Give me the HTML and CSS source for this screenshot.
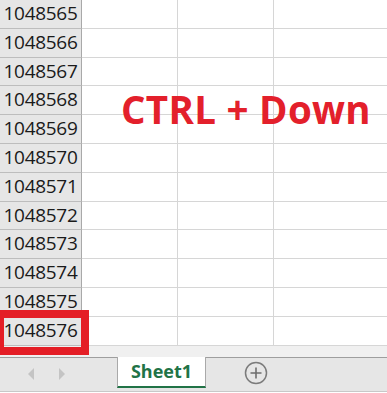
FILE: index.html
```html
<!DOCTYPE html>
<html>
<head>
<meta charset="utf-8">
<link rel="stylesheet" href="styles.css">
</head>
<body>
<div class="app">
  <div class="grid">
    <div class="rh">1048565</div><div class="c"></div><div class="c"></div><div class="c last"></div>
    <div class="rh">1048566</div><div class="c"></div><div class="c"></div><div class="c last"></div>
    <div class="rh">1048567</div><div class="c"></div><div class="c"></div><div class="c last"></div>
    <div class="rh">1048568</div><div class="c"></div><div class="c"></div><div class="c last"></div>
    <div class="rh">1048569</div><div class="c"></div><div class="c"></div><div class="c last"></div>
    <div class="rh">1048570</div><div class="c"></div><div class="c"></div><div class="c last"></div>
    <div class="rh">1048571</div><div class="c"></div><div class="c"></div><div class="c last"></div>
    <div class="rh">1048572</div><div class="c"></div><div class="c"></div><div class="c last"></div>
    <div class="rh">1048573</div><div class="c"></div><div class="c"></div><div class="c last"></div>
    <div class="rh">1048574</div><div class="c"></div><div class="c"></div><div class="c last"></div>
    <div class="rh">1048575</div><div class="c"></div><div class="c"></div><div class="c last"></div>
    <div class="rh">1048576</div><div class="c"></div><div class="c"></div><div class="c last"></div>
  </div>
  <div class="beyond"></div>
  <div class="tabbar">
    <div class="navs">
      <svg class="nav" width="8" height="12" viewBox="0 0 8 12"><polygon points="7,0 7,12 1,6" fill="#c4c4c4"/></svg>
      <svg class="nav" width="8" height="12" viewBox="0 0 8 12"><polygon points="1,0 1,12 7,6" fill="#c4c4c4"/></svg>
    </div>
    <div class="tab">Sheet1</div>
    <svg class="add" width="24" height="24" viewBox="0 0 24 24">
      <circle cx="12" cy="12" r="10.5" fill="none" stroke="#7b7b7b" stroke-width="1.5"/>
      <path d="M12 6.5V17.5M6.5 12H17.5" stroke="#6e6e6e" stroke-width="1.6"/>
    </svg>
  </div>
  <div class="callout">CTRL + Down</div>
  <div class="highlight"></div>
</div>
</body>
</html>
```
FILE: styles.css
```css
html, body {
  margin: 0;
  padding: 0;
  background: #ffffff;
  overflow: hidden;
}
.app {
  position: relative;
  width: 387px;
  height: 393px;
  font-family: "Open Sans", "Noto Sans", sans-serif;
}
.grid {
  display: grid;
  grid-template-columns: 82px 96px 96px 1fr;
  grid-auto-rows: 28.8px;
}
.rh {
  box-sizing: border-box;
  background: #e6e6e6;
  border-right: 1px solid #a9a9a9;
  border-bottom: 1px solid #bdbdbd;
  color: #1a1a1a;
  font-size: 19px;
  line-height: 27px;
  text-align: center;
  letter-spacing: -0.3px;
}
.c {
  box-sizing: border-box;
  border-right: 1px solid #d6d6d6;
  border-bottom: 1px solid #d6d6d6;
}
.c.last {
  border-right: none;
}
.beyond {
  height: 11px;
  background: #f0f0f0;
}
.tabbar {
  box-sizing: border-box;
  height: 35px;
  background: #e6e6e6;
  border-top: 1px solid #9e9e9e;
  border-bottom: 1px solid #c8c8c8;
  display: flex;
  align-items: stretch;
}
.navs {
  width: 117px;
  display: flex;
  align-items: center;
  padding-left: 27px;
  gap: 23px;
  box-sizing: border-box;
}
.nav {
  display: block;
}
.tab {
  box-sizing: border-box;
  width: 89px;
  height: 31px;
  margin-top: -1px;
  background: #ffffff;
  border-left: 1px solid #a9a9a9;
  border-right: 1px solid #a9a9a9;
  border-bottom: 2.5px solid #217346;
  color: #217346;
  font-weight: 700;
  font-size: 18px;
  line-height: 29px;
  text-align: center;
}
.add {
  display: block;
  align-self: center;
  margin-left: 38px;
  margin-top: -2px;
}
.callout {
  position: absolute;
  left: 121px;
  top: 84px;
  color: #e3202b;
  font-weight: 700;
  font-size: 38.5px;
  line-height: 50px;
  letter-spacing: 0.3px;
  white-space: nowrap;
}
.highlight {
  position: absolute;
  left: -4px;
  top: 310px;
  width: 93px;
  height: 45px;
  box-sizing: border-box;
  border: 8.5px solid #e41e26;
}
```
